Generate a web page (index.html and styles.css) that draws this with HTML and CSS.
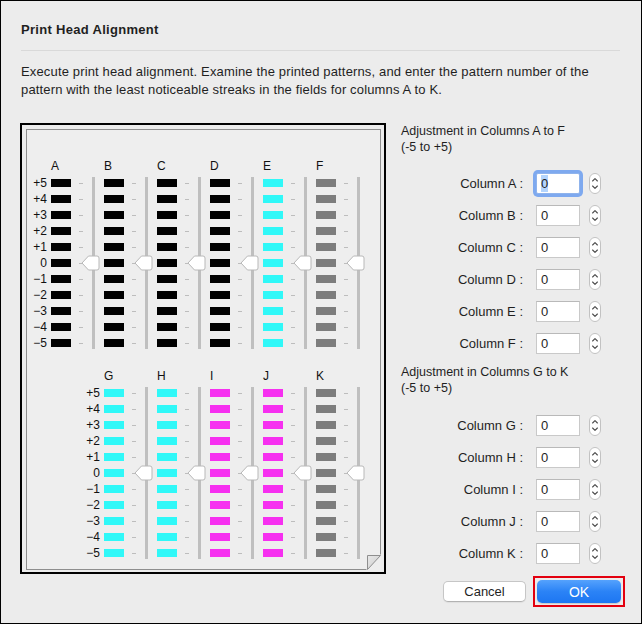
FILE: index.html
```html
<!DOCTYPE html>
<html>
<head>
<meta charset="utf-8">
<link rel="stylesheet" href="styles.css">
</head>
<body>
<div class="dialog">
  <div class="title">Print Head Alignment</div>
  <div class="sep"></div>
  <p class="desc">Execute print head alignment. Examine the printed patterns, and enter the pattern number of the pattern with the least noticeable streaks in the fields for columns A to K.</p>
  <div class="main">
    <div class="pbox">
      <div class="page">
        <div class="block">
          <div class="nums">
            <div class="hd"></div>
            <div>+5</div><div>+4</div><div>+3</div><div>+2</div><div>+1</div><div>0</div><div>&minus;1</div><div>&minus;2</div><div>&minus;3</div><div>&minus;4</div><div>&minus;5</div>
          </div>
          <div class="col"><div class="hd">A</div><div class="bars k"></div><div class="dashes"></div><div class="track"><svg class="thumb" width="19" height="16" viewBox="0 0 19 16"><path d="M1 8 L7.5 1 H16 Q18 1 18 3 V13 Q18 15 16 15 H7.5 Z" fill="#fff" stroke="#b8b8b8"/></svg></div></div>
          <div class="col"><div class="hd">B</div><div class="bars k"></div><div class="dashes"></div><div class="track"><svg class="thumb" width="19" height="16" viewBox="0 0 19 16"><path d="M1 8 L7.5 1 H16 Q18 1 18 3 V13 Q18 15 16 15 H7.5 Z" fill="#fff" stroke="#b8b8b8"/></svg></div></div>
          <div class="col"><div class="hd">C</div><div class="bars k"></div><div class="dashes"></div><div class="track"><svg class="thumb" width="19" height="16" viewBox="0 0 19 16"><path d="M1 8 L7.5 1 H16 Q18 1 18 3 V13 Q18 15 16 15 H7.5 Z" fill="#fff" stroke="#b8b8b8"/></svg></div></div>
          <div class="col"><div class="hd">D</div><div class="bars k"></div><div class="dashes"></div><div class="track"><svg class="thumb" width="19" height="16" viewBox="0 0 19 16"><path d="M1 8 L7.5 1 H16 Q18 1 18 3 V13 Q18 15 16 15 H7.5 Z" fill="#fff" stroke="#b8b8b8"/></svg></div></div>
          <div class="col"><div class="hd">E</div><div class="bars c"></div><div class="dashes"></div><div class="track"><svg class="thumb" width="19" height="16" viewBox="0 0 19 16"><path d="M1 8 L7.5 1 H16 Q18 1 18 3 V13 Q18 15 16 15 H7.5 Z" fill="#fff" stroke="#b8b8b8"/></svg></div></div>
          <div class="col"><div class="hd">F</div><div class="bars g"></div><div class="dashes"></div><div class="track"><svg class="thumb" width="19" height="16" viewBox="0 0 19 16"><path d="M1 8 L7.5 1 H16 Q18 1 18 3 V13 Q18 15 16 15 H7.5 Z" fill="#fff" stroke="#b8b8b8"/></svg></div></div>
        </div>
        <div class="block lower">
          <div class="nums">
            <div class="hd"></div>
            <div>+5</div><div>+4</div><div>+3</div><div>+2</div><div>+1</div><div>0</div><div>&minus;1</div><div>&minus;2</div><div>&minus;3</div><div>&minus;4</div><div>&minus;5</div>
          </div>
          <div class="col"><div class="hd">G</div><div class="bars c"></div><div class="dashes"></div><div class="track"><svg class="thumb" width="19" height="16" viewBox="0 0 19 16"><path d="M1 8 L7.5 1 H16 Q18 1 18 3 V13 Q18 15 16 15 H7.5 Z" fill="#fff" stroke="#b8b8b8"/></svg></div></div>
          <div class="col"><div class="hd">H</div><div class="bars c"></div><div class="dashes"></div><div class="track"><svg class="thumb" width="19" height="16" viewBox="0 0 19 16"><path d="M1 8 L7.5 1 H16 Q18 1 18 3 V13 Q18 15 16 15 H7.5 Z" fill="#fff" stroke="#b8b8b8"/></svg></div></div>
          <div class="col"><div class="hd">I</div><div class="bars m"></div><div class="dashes"></div><div class="track"><svg class="thumb" width="19" height="16" viewBox="0 0 19 16"><path d="M1 8 L7.5 1 H16 Q18 1 18 3 V13 Q18 15 16 15 H7.5 Z" fill="#fff" stroke="#b8b8b8"/></svg></div></div>
          <div class="col"><div class="hd">J</div><div class="bars m"></div><div class="dashes"></div><div class="track"><svg class="thumb" width="19" height="16" viewBox="0 0 19 16"><path d="M1 8 L7.5 1 H16 Q18 1 18 3 V13 Q18 15 16 15 H7.5 Z" fill="#fff" stroke="#b8b8b8"/></svg></div></div>
          <div class="col"><div class="hd">K</div><div class="bars g"></div><div class="dashes"></div><div class="track"><svg class="thumb" width="19" height="16" viewBox="0 0 19 16"><path d="M1 8 L7.5 1 H16 Q18 1 18 3 V13 Q18 15 16 15 H7.5 Z" fill="#fff" stroke="#b8b8b8"/></svg></div></div>
        </div>
        <svg class="fold" width="15" height="16" viewBox="0 0 15 16">
          <polygon points="15,0 15,16 0,16" fill="#eeeeee"/>
          <defs><linearGradient id="fg" x1="0" y1="0" x2="1" y2="1"><stop offset="0" stop-color="#e8e8e8"/><stop offset="1" stop-color="#cdcdcd"/></linearGradient></defs>
          <polygon points="1.5,1.5 14.5,1.5 1.5,15.5" fill="url(#fg)" stroke="#8e8e8e" stroke-width="1"/>
        </svg>
      </div>
    </div>
    <div class="right">
      <div class="gtitle">Adjustment in Columns A to F<br>(-5 to +5)</div>
      <div class="rows">
        <div class="row"><span class="lab">Column A :</span><div class="field focus"><span class="sel">0</span></div><svg class="step" width="12" height="21" viewBox="0 0 12 21"><rect x="0.5" y="0.5" width="11" height="20" rx="5.5" fill="#fff" stroke="#c2c2c2"/><path d="M3.6 8 L6 5.6 L8.4 8 M3.6 13 L6 15.4 L8.4 13" fill="none" stroke="#4a4a4a" stroke-width="1.1" stroke-linecap="round" stroke-linejoin="round"/></svg></div>
        <div class="row"><span class="lab">Column B :</span><div class="field">0</div><svg class="step" width="12" height="21" viewBox="0 0 12 21"><rect x="0.5" y="0.5" width="11" height="20" rx="5.5" fill="#fff" stroke="#c2c2c2"/><path d="M3.6 8 L6 5.6 L8.4 8 M3.6 13 L6 15.4 L8.4 13" fill="none" stroke="#4a4a4a" stroke-width="1.1" stroke-linecap="round" stroke-linejoin="round"/></svg></div>
        <div class="row"><span class="lab">Column C :</span><div class="field">0</div><svg class="step" width="12" height="21" viewBox="0 0 12 21"><rect x="0.5" y="0.5" width="11" height="20" rx="5.5" fill="#fff" stroke="#c2c2c2"/><path d="M3.6 8 L6 5.6 L8.4 8 M3.6 13 L6 15.4 L8.4 13" fill="none" stroke="#4a4a4a" stroke-width="1.1" stroke-linecap="round" stroke-linejoin="round"/></svg></div>
        <div class="row"><span class="lab">Column D :</span><div class="field">0</div><svg class="step" width="12" height="21" viewBox="0 0 12 21"><rect x="0.5" y="0.5" width="11" height="20" rx="5.5" fill="#fff" stroke="#c2c2c2"/><path d="M3.6 8 L6 5.6 L8.4 8 M3.6 13 L6 15.4 L8.4 13" fill="none" stroke="#4a4a4a" stroke-width="1.1" stroke-linecap="round" stroke-linejoin="round"/></svg></div>
        <div class="row"><span class="lab">Column E :</span><div class="field">0</div><svg class="step" width="12" height="21" viewBox="0 0 12 21"><rect x="0.5" y="0.5" width="11" height="20" rx="5.5" fill="#fff" stroke="#c2c2c2"/><path d="M3.6 8 L6 5.6 L8.4 8 M3.6 13 L6 15.4 L8.4 13" fill="none" stroke="#4a4a4a" stroke-width="1.1" stroke-linecap="round" stroke-linejoin="round"/></svg></div>
        <div class="row"><span class="lab">Column F :</span><div class="field">0</div><svg class="step" width="12" height="21" viewBox="0 0 12 21"><rect x="0.5" y="0.5" width="11" height="20" rx="5.5" fill="#fff" stroke="#c2c2c2"/><path d="M3.6 8 L6 5.6 L8.4 8 M3.6 13 L6 15.4 L8.4 13" fill="none" stroke="#4a4a4a" stroke-width="1.1" stroke-linecap="round" stroke-linejoin="round"/></svg></div>
      </div>
      <div class="gtitle second">Adjustment in Columns G to K<br>(-5 to +5)</div>
      <div class="rows rows2">
        <div class="row"><span class="lab">Column G :</span><div class="field">0</div><svg class="step" width="12" height="21" viewBox="0 0 12 21"><rect x="0.5" y="0.5" width="11" height="20" rx="5.5" fill="#fff" stroke="#c2c2c2"/><path d="M3.6 8 L6 5.6 L8.4 8 M3.6 13 L6 15.4 L8.4 13" fill="none" stroke="#4a4a4a" stroke-width="1.1" stroke-linecap="round" stroke-linejoin="round"/></svg></div>
        <div class="row"><span class="lab">Column H :</span><div class="field">0</div><svg class="step" width="12" height="21" viewBox="0 0 12 21"><rect x="0.5" y="0.5" width="11" height="20" rx="5.5" fill="#fff" stroke="#c2c2c2"/><path d="M3.6 8 L6 5.6 L8.4 8 M3.6 13 L6 15.4 L8.4 13" fill="none" stroke="#4a4a4a" stroke-width="1.1" stroke-linecap="round" stroke-linejoin="round"/></svg></div>
        <div class="row"><span class="lab">Column I :</span><div class="field">0</div><svg class="step" width="12" height="21" viewBox="0 0 12 21"><rect x="0.5" y="0.5" width="11" height="20" rx="5.5" fill="#fff" stroke="#c2c2c2"/><path d="M3.6 8 L6 5.6 L8.4 8 M3.6 13 L6 15.4 L8.4 13" fill="none" stroke="#4a4a4a" stroke-width="1.1" stroke-linecap="round" stroke-linejoin="round"/></svg></div>
        <div class="row"><span class="lab">Column J :</span><div class="field">0</div><svg class="step" width="12" height="21" viewBox="0 0 12 21"><rect x="0.5" y="0.5" width="11" height="20" rx="5.5" fill="#fff" stroke="#c2c2c2"/><path d="M3.6 8 L6 5.6 L8.4 8 M3.6 13 L6 15.4 L8.4 13" fill="none" stroke="#4a4a4a" stroke-width="1.1" stroke-linecap="round" stroke-linejoin="round"/></svg></div>
        <div class="row"><span class="lab">Column K :</span><div class="field">0</div><svg class="step" width="12" height="21" viewBox="0 0 12 21"><rect x="0.5" y="0.5" width="11" height="20" rx="5.5" fill="#fff" stroke="#c2c2c2"/><path d="M3.6 8 L6 5.6 L8.4 8 M3.6 13 L6 15.4 L8.4 13" fill="none" stroke="#4a4a4a" stroke-width="1.1" stroke-linecap="round" stroke-linejoin="round"/></svg></div>
      </div>
      <div class="buttons">
        <button class="btn cancel">Cancel</button>
        <div class="hl"><button class="btn ok">OK</button></div>
      </div>
    </div>
  </div>
</div>
</body>
</html>
```

FILE: styles.css
```css
html, body {
  margin: 0;
  padding: 0;
  background: #ececec;
}
.dialog {
  width: 642px;
  height: 624px;
  box-sizing: border-box;
  border: 1px solid #000;
  background: #ececec;
  padding: 21px 16px 0 19px;
  font-family: "Liberation Sans", Arial, sans-serif;
  color: #1f1f1f;
}
.title {
  font-size: 13px;
  font-weight: bold;
  line-height: 16px;
  margin-left: 1px;
  letter-spacing: 0.3px;
}
.sep {
  height: 1px;
  background: #d9d9d9;
  margin: 12px 5px 0 1px;
}
.desc {
  margin: 12px 0 0 1px;
  font-size: 13px;
  line-height: 18px;
  letter-spacing: 0.15px;
}
.main {
  display: flex;
  margin-top: 24px;
}
.pbox {
  width: 366px;
  height: 451px;
  box-sizing: border-box;
  border: 2px solid #000;
  padding: 4px 3px 2px 4px;
  flex: none;
}
.page {
  position: relative;
  height: 100%;
  box-sizing: border-box;
  border: 1px solid #8e8e8e;
  background: #eeeeee;
  padding-top: 29px;
}
.block {
  display: flex;
}
.block.lower {
  margin-top: 18px;
  margin-left: 53px;
}
.nums {
  width: 20px;
  margin-right: 4px;
  text-align: right;
  font-size: 12px;
  line-height: 16px;
  color: #111;
}
.hd {
  height: 16px;
  line-height: 14px;
  font-size: 12px;
  color: #111;
}
.col {
  display: grid;
  grid-template-columns: 20px 8px 4px 9px 3px 9px;
  grid-template-rows: 16px 176px;
}
.col .hd {
  grid-column: 1 / 7;
  grid-row: 1;
}
.bars {
  grid-column: 1;
  grid-row: 2;
}
.bars.k { background: repeating-linear-gradient(180deg, transparent 0 4px, #000 4px 12px, transparent 12px 16px); }
.bars.c { background: repeating-linear-gradient(180deg, transparent 0 4px, #30f8f8 4px 12px, transparent 12px 16px); }
.bars.m { background: repeating-linear-gradient(180deg, transparent 0 4px, #f630f0 4px 12px, transparent 12px 16px); }
.bars.g { background: repeating-linear-gradient(180deg, transparent 0 4px, #7d7d7d 4px 12px, transparent 12px 16px); }
.dashes {
  grid-column: 3;
  grid-row: 2;
  background: repeating-linear-gradient(180deg, transparent 0 8px, #bdbdbd 8px 9px, transparent 9px 16px);
}
.track {
  grid-column: 5;
  grid-row: 2;
  margin: 2px 0;
  background: #bfbfbf;
  position: relative;
}
.thumb {
  position: absolute;
  left: -11px;
  top: 78px;
  display: block;
}
.fold {
  position: absolute;
  right: -1px;
  bottom: -1px;
  display: block;
}
.right {
  margin-left: 15px;
  width: 224px;
  flex: none;
  font-size: 13px;
}
.gtitle {
  font-size: 12.5px;
  line-height: 16px;
}
.gtitle.second {
  margin-top: 10px;
}
.rows {
  margin-top: 17px;
  display: flex;
  flex-direction: column;
  gap: 10px;
}
.rows2 {
  margin-top: 18px;
}
.row {
  display: flex;
  align-items: center;
  height: 22px;
  padding-right: 24px;
}
.lab {
  flex: 1;
  text-align: right;
  margin-right: 13px;
}
.field {
  width: 44px;
  height: 21px;
  box-sizing: border-box;
  background: #fff;
  border: 1px solid #c9c9c9;
  border-top-color: #b9b9b9;
  padding-left: 4px;
  line-height: 19px;
  font-size: 13px;
}
.field.focus {
  border-color: #8fb3ec;
  box-shadow: 0 0 0 3px #7ea9ef;
  border-radius: 2px;
}
.sel {
  background: #b3d4fd;
  padding: 1px 0;
}
.step {
  margin-left: 9px;
  display: block;
  flex: none;
}
.buttons {
  margin-top: 12px;
  display: flex;
  justify-content: flex-end;
  align-items: center;
}
.btn {
  font-family: "Liberation Sans", Arial, sans-serif;
  font-size: 13px;
  border-radius: 5px;
  padding: 0;
  margin: 0;
}
.cancel {
  width: 83px;
  height: 21px;
  margin-right: 7px;
  background: #fff;
  color: #1f1f1f;
  border: 1px solid #c6c6c6;
  border-bottom-color: #b2b2b2;
  box-shadow: 0 1px 1px rgba(0,0,0,0.06);
}
.hl {
  border: 2px solid #e3000f;
  padding: 2px;
}
.ok {
  display: block;
  width: 84px;
  height: 23px;
  color: #fff;
  font-size: 14px;
  border: none;
  background: linear-gradient(180deg, #55a2fd 0%, #2b83f6 50%, #1d76f2 100%);
  box-shadow: 0 1px 1px rgba(0,0,0,0.15);
}
```
